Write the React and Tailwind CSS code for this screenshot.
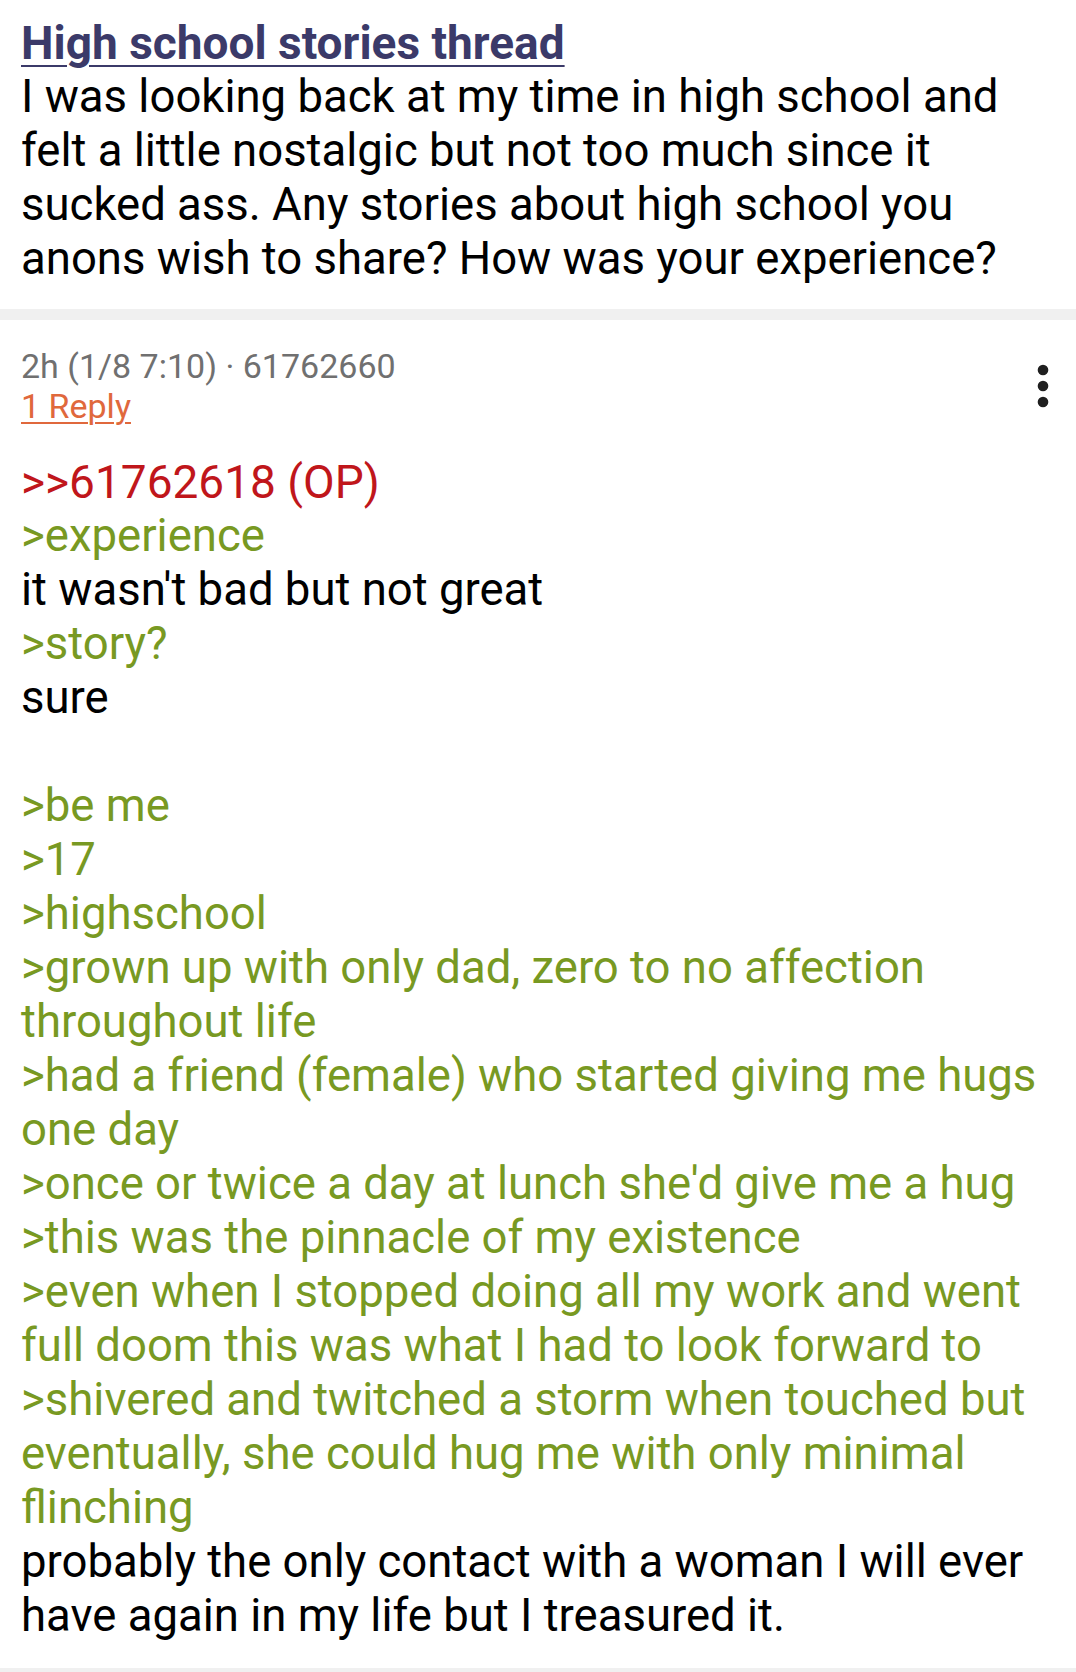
import React from 'react'

const op = [
  'I was looking back at my time in high school and',
  'felt a little nostalgic but not too much since it',
  'sucked ass. Any stories about high school you',
  'anons wish to share? How was your experience?',
]

// t: 'q' quote link, 'g' greentext, 'n' normal, 'b' blank
const reply = [
  { t: 'q', s: '>>61762618 (OP)' },
  { t: 'g', s: '>experience' },
  { t: 'n', s: "it wasn't bad but not great" },
  { t: 'g', s: '>story?' },
  { t: 'n', s: 'sure' },
  { t: 'b', s: '' },
  { t: 'g', s: '>be me' },
  { t: 'g', s: '>17' },
  { t: 'g', s: '>highschool' },
  { t: 'g', s: '>grown up with only dad, zero to no affection' },
  { t: 'g', s: 'throughout life' },
  { t: 'g', s: '>had a friend (female) who started giving me hugs' },
  { t: 'g', s: 'one day' },
  { t: 'g', s: ">once or twice a day at lunch she'd give me a hug" },
  { t: 'g', s: '>this was the pinnacle of my existence' },
  { t: 'g', s: '>even when I stopped doing all my work and went' },
  { t: 'g', s: 'full doom this was what I had to look forward to' },
  { t: 'g', s: '>shivered and twitched a storm when touched but' },
  { t: 'g', s: 'eventually, she could hug me with only minimal' },
  { t: 'g', s: 'flinching' },
  { t: 'n', s: 'probably the only contact with a woman I will ever' },
  { t: 'n', s: 'have again in my life but I treasured it.' },
]

const lineColor = {
  q: 'text-[#c0161b] text-[46px]',
  g: 'text-[#789922]',
  n: 'text-black',
  b: 'text-black',
}

const Dots = () => (
  <svg width="14" height="44" viewBox="0 0 14 44" className="text-[#1f1f1f]">
    <circle cx="7" cy="6" r="5.3" fill="currentColor" />
    <circle cx="7" cy="22" r="5.3" fill="currentColor" />
    <circle cx="7" cy="38" r="5.3" fill="currentColor" />
  </svg>
)

const App = () => {
  return (
    <div className="w-[1076px] min-h-[1672px] bg-white font-['Roboto',sans-serif] overflow-hidden">
      {/* OP */}
      <div className="px-[21px] pt-[16px] pb-[23px]">
        <a className="block text-[46px] leading-[54px] font-bold text-[#3b3a69] underline decoration-[2px] underline-offset-[6px] whitespace-nowrap">
          High school stories thread
        </a>
        <div className="text-[45.5px] leading-[54px] text-black">
          {op.map((l, i) => (
            <div key={i} className="whitespace-nowrap">{l}</div>
          ))}
        </div>
      </div>

      <div className="h-[11px] bg-[#f0f0f0]" />

      {/* Reply */}
      <div className="px-[21px] pt-[26px] pb-[25px]">
        <div className="flex items-center justify-between">
          <div className="flex flex-col text-[34px] leading-[40px]">
            <span className="text-[#707070] whitespace-nowrap">2h (1/8 7:10) · 61762660</span>
            <a className="text-[#e0683c] underline decoration-[2px] underline-offset-[4px] self-start">1 Reply</a>
          </div>
          <button className="mr-[5px] flex items-center justify-center">
            <Dots />
          </button>
        </div>

        <div className="mt-[29px] text-[45.5px] leading-[54px]">
          {reply.map((l, i) => (
            <div key={i} className={`whitespace-nowrap h-[54px] ${lineColor[l.t]}`}>
              {l.s}
            </div>
          ))}
        </div>
      </div>

      <div className="h-[7px] bg-[#f0f0f0]" />
    </div>
  )
}

export default App
